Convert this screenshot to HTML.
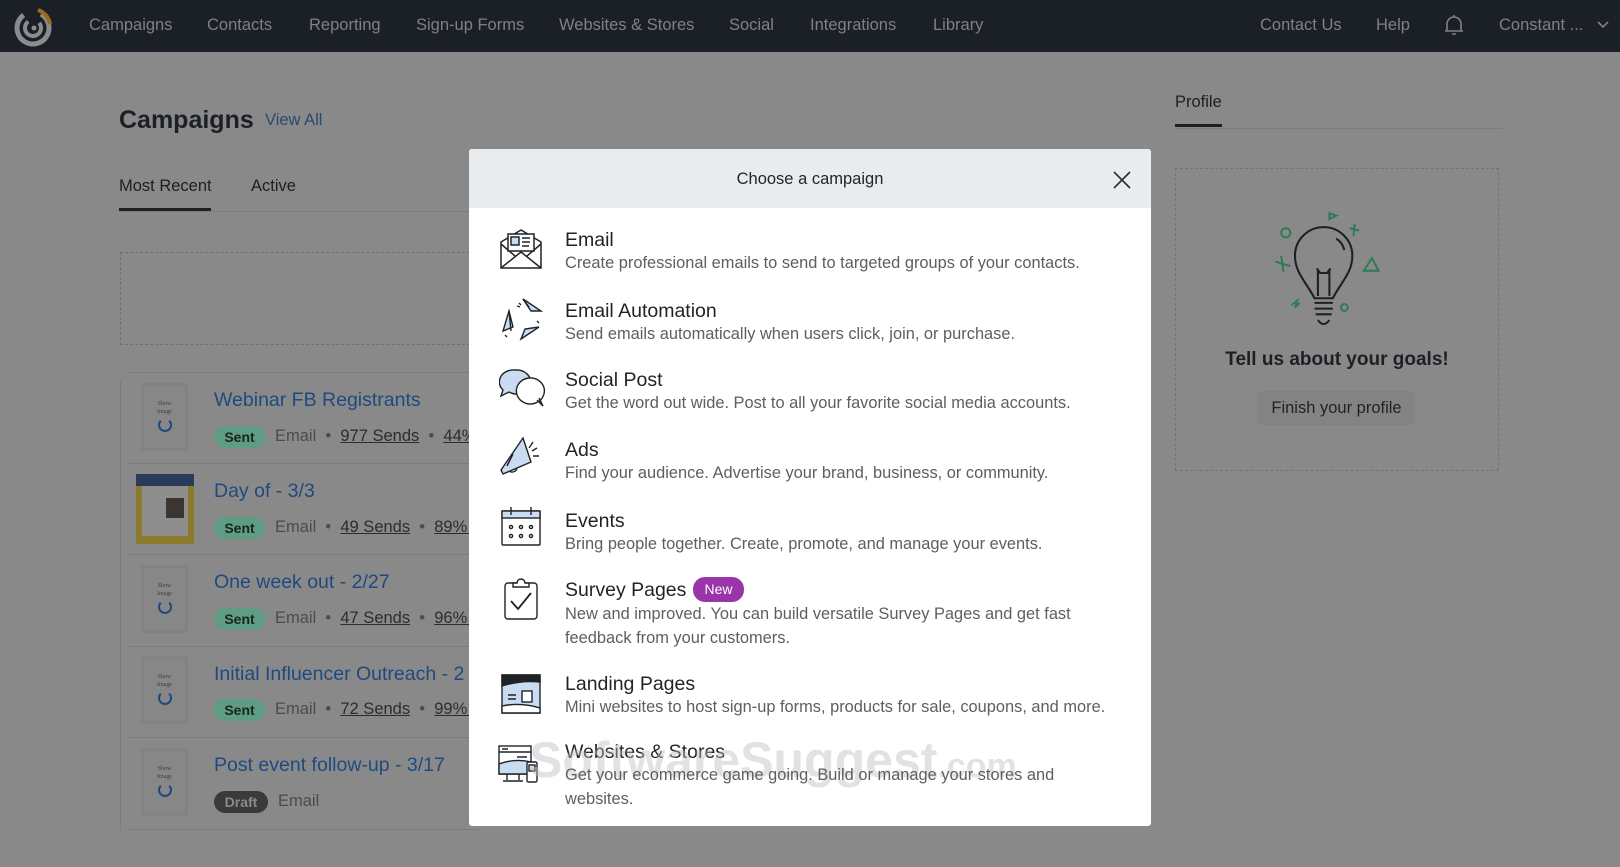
<!DOCTYPE html>
<html><head><meta charset="utf-8"><style>
*{margin:0;padding:0;box-sizing:border-box}
body{width:1620px;height:867px;overflow:hidden;background:#898989;font-family:"Liberation Sans",Arial,sans-serif;position:relative}
.a{position:absolute;white-space:nowrap}
.nav{position:absolute;left:0;top:0;width:1620px;height:52px;background:#1b2027}
.nv{position:absolute;top:16px;font-size:16.5px;color:#7e8186}
.sep{position:absolute;height:1px;background:#7b7b7b}
.th{position:absolute;left:141px;width:47px;height:68px;border:3px solid #838383;background:#878787}
.th span{position:absolute;left:0;right:0;text-align:center;font-family:"Liberation Serif",serif;font-size:6px;color:#3a3f47;top:14px;line-height:8px}
.th b{position:absolute;left:14px;top:32px;width:14px;height:14px;border:2px solid #1f4a7f;border-radius:50%;border-top-color:transparent}
.tt{position:absolute;left:214px;font-size:19.5px;color:#1f4a7f}
.pill{position:absolute;left:214px;width:51px;height:22px;border-radius:11px;background:#5f9c84;color:#1a2520;font-size:14px;font-weight:bold;text-align:center;line-height:22px}
.meta{position:absolute;left:275px;font-size:16.5px;color:#4a4c4f}
.meta u{color:#2a2c2f}
.modal{position:absolute;left:469px;top:149px;width:682px;height:677px;background:#fff;border-radius:3px;overflow:hidden}
.mh{height:59px;background:#e9ecef;text-align:center;line-height:61px;font-size:16.5px;color:#22262a}
.it{position:absolute;left:96px;font-size:19.5px;color:#1f2326}
.ds{position:absolute;left:96px;font-size:16.4px;color:#5b5f63;line-height:23.5px}
.ic{position:absolute;left:30px}
</style></head><body>
<div class="nav">
<svg class="a" style="left:13px;top:6px" width="42" height="42" viewBox="0 0 42 42"><circle cx="20" cy="22" r="16" fill="none" stroke="#8a8d90" stroke-width="5" stroke-dasharray="82 20" transform="rotate(-60 20 22)"/><circle cx="20" cy="22" r="8" fill="none" stroke="#8a8d90" stroke-width="4" stroke-dasharray="38 12" transform="rotate(-40 20 22)"/><path d="M25 4 A18 18 0 0 1 37 18" fill="none" stroke="#9a6b1f" stroke-width="4"/><circle cx="21" cy="22" r="2.5" fill="#8a8d90"/></svg>
<div class="nv" style="left:89px">Campaigns</div>
<div class="nv" style="left:207px">Contacts</div>
<div class="nv" style="left:309px">Reporting</div>
<div class="nv" style="left:416px">Sign-up Forms</div>
<div class="nv" style="left:559px">Websites &amp; Stores</div>
<div class="nv" style="left:729px">Social</div>
<div class="nv" style="left:810px">Integrations</div>
<div class="nv" style="left:933px">Library</div>
<div class="nv" style="left:1260px">Contact Us</div>
<div class="nv" style="left:1376px">Help</div>
<svg class="a" style="left:1444px;top:14px" width="20" height="22" viewBox="0 0 20 22"><path d="M3 17 V10 A7 7 0 0 1 17 10 V17 Z M1 17 H19 M8 20 H12 M10 1 V3" fill="none" stroke="#7e8186" stroke-width="1.6"/></svg>
<div class="nv" style="left:1499px">Constant ...</div>
<svg class="a" style="left:1596px;top:20px" width="14" height="10" viewBox="0 0 14 10"><path d="M2 2 L7 7 L12 2" fill="none" stroke="#7e8186" stroke-width="1.6"/></svg>
</div>

<div class="a" style="left:119px;top:106px;font-size:25px;font-weight:bold;color:#1c2025">Campaigns</div>
<div class="a" style="left:265px;top:111px;font-size:16.5px;color:#2a4a6f">View All</div>
<div class="a" style="left:119px;top:177px;font-size:16.5px;color:#1c2025">Most Recent</div>
<div class="a" style="left:251px;top:177px;font-size:16.5px;color:#1c2025">Active</div>
<div class="sep" style="left:119px;top:211px;width:360px"></div>
<div class="a" style="left:119px;top:208px;width:92px;height:3px;background:#1c2025"></div>
<div class="a" style="left:120px;top:252px;width:360px;height:93px;border:1px dashed #707070;border-right:none"></div>

<div class="a" style="left:120px;top:380px;width:1px;height:450px;background:#7d7d7d"></div>
<div class="sep" style="left:128px;top:372px;width:350px"></div>
<div class="sep" style="left:128px;top:463px;width:350px"></div>
<div class="sep" style="left:128px;top:554px;width:350px"></div>
<div class="sep" style="left:128px;top:646px;width:350px"></div>
<div class="sep" style="left:128px;top:737px;width:350px"></div>
<div class="sep" style="left:128px;top:829px;width:350px"></div>

<div class="th" style="top:383px"><span>Show<br>Image</span><b></b></div>
<div class="tt" style="top:389px">Webinar FB Registrants</div>
<div class="pill" style="top:426px">Sent</div>
<div class="meta" style="top:427px">Email&nbsp; • &nbsp;<u>977 Sends</u>&nbsp; • &nbsp;<u>44% O</u></div>

<div class="a" style="left:136px;top:474px;width:58px;height:70px;background:#8a7a2a"><div class="a" style="left:6px;top:12px;width:46px;height:50px;background:#8e8e8e"></div><div class="a" style="left:30px;top:24px;width:18px;height:20px;background:#3a3530"></div><div class="a" style="left:0;top:0;width:58px;height:12px;background:#2c3a5a"></div></div>
<div class="tt" style="top:480px">Day of - 3/3</div>
<div class="pill" style="top:517px">Sent</div>
<div class="meta" style="top:518px">Email&nbsp; • &nbsp;<u>49 Sends</u>&nbsp; • &nbsp;<u>89% O</u></div>

<div class="th" style="top:565px"><span>Show<br>Image</span><b></b></div>
<div class="tt" style="top:571px">One week out - 2/27</div>
<div class="pill" style="top:608px">Sent</div>
<div class="meta" style="top:609px">Email&nbsp; • &nbsp;<u>47 Sends</u>&nbsp; • &nbsp;<u>96% O</u></div>

<div class="th" style="top:656px"><span>Show<br>Image</span><b></b></div>
<div class="tt" style="top:663px">Initial Influencer Outreach - 2</div>
<div class="pill" style="top:699px">Sent</div>
<div class="meta" style="top:700px">Email&nbsp; • &nbsp;<u>72 Sends</u>&nbsp; • &nbsp;<u>99% O</u></div>

<div class="th" style="top:748px"><span>Show<br>Image</span><b></b></div>
<div class="tt" style="top:754px">Post event follow-up - 3/17</div>
<div class="pill" style="top:791px;width:54px;background:#3a3a3a;color:#8a8a8a">Draft</div>
<div class="meta" style="top:792px;left:278px">Email</div>

<div class="a" style="left:1175px;top:93px;font-size:16.5px;color:#1c2025">Profile</div>
<div class="sep" style="left:1175px;top:128px;width:328px"></div>
<div class="a" style="left:1175px;top:124px;width:47px;height:3px;background:#1c2025"></div>
<div class="a" style="left:1175px;top:168px;width:324px;height:303px;border:1.5px dashed #737373"></div>
<svg class="a" style="left:1272px;top:204px" width="132" height="130" viewBox="0 0 115 113"><g fill="none" stroke="#1c2025" stroke-width="1.8"><path d="M37 82 C30 68 20 60 20 45 A25 25 0 0 1 70 45 C70 60 60 68 53 82 Z"/><path d="M37 86 H53 M37 91 H53 M38 96 H52 M40 101 Q45 108 50 101"/><path d="M40 80 V57 M50 80 V57 M39 56 L42 60 H48 L51 56"/><path d="M56 30 A16 16 0 0 1 63 40"/></g><g fill="none" stroke="#2e7a55" stroke-width="1.7"><circle cx="12" cy="25" r="4"/><path d="M3 50 L16 54 M8 45 L10 59"/><path d="M17 88 L22 84 L20 90 L24 86"/><circle cx="63" cy="90" r="3"/><path d="M87 47 L80 58 H93 Z"/><path d="M50 8 L56 10 L50 13 Z"/><path d="M68 21 L76 23 M72 17 L71 28"/></g></svg>
<div class="a" style="left:1175px;top:349px;width:324px;text-align:center;font-size:19px;font-weight:bold;color:#1c2025">Tell us about your goals!</div>
<div class="a" style="left:1258px;top:391px;width:157px;height:34px;background:#838383;border-radius:4px;text-align:center;line-height:34px;font-size:16.5px;color:#1f2326">Finish your profile</div>

<div class="modal">
<div class="mh">Choose a campaign</div>
<svg class="a" style="left:643px;top:21px" width="20" height="20" viewBox="0 0 20 20"><path d="M2 2 L18 18 M18 2 L2 18" stroke="#2a2e32" stroke-width="1.6"/></svg>

<svg class="ic" style="top:77px" width="44" height="44" viewBox="0 0 44 44"><g fill="none" stroke="#1f2326" stroke-width="1.5"><path d="M2 16 L22 4 L42 16 V42 H2 Z"/><path d="M2 42 L22 26 L42 42 M2 18 L16 30 M42 18 L28 30"/><rect x="9" y="8" width="26" height="17" fill="#fff"/><rect x="12" y="11" width="8" height="8" fill="#c9dcf2"/><path d="M23 12 H31 M23 16 H31 M23 20 H30"/></g></svg>
<div class="it" style="top:80px">Email</div>
<div class="ds" style="top:103px">Create professional emails to send to targeted groups of your contacts.</div>

<svg class="ic" style="top:148px" width="46" height="44" viewBox="0 0 46 44"><g fill="none" stroke="#1f2326" stroke-width="1.4"><path d="M24 2 L32 14 L42 14 Z" fill="#c9dcf2"/><path d="M24 2 L30 10"/><path d="M10 14 L4 34 L14 30 Z" fill="#c9dcf2"/><path d="M10 14 L12 34"/><path d="M40 30 L22 42 L26 32 Z" fill="#c9dcf2"/><path d="M20 6 L22 8 M18 9 L21 10 M6 38 L8 40 M38 24 L40 26"/></g></svg>
<div class="it" style="top:151px">Email Automation</div>
<div class="ds" style="top:174px">Send emails automatically when users click, join, or purchase.</div>

<svg class="ic" style="top:217px" width="48" height="44" viewBox="0 0 48 44"><g fill="none" stroke="#1f2326" stroke-width="1.4"><path d="M16 4 A14 12 0 0 0 4 24 L2 30 L10 26 A14 12 0 1 0 16 4 Z" fill="#c9dcf2"/><path d="M30 12 A14 13 0 1 1 24 36 A14 13 0 0 1 30 12 Z" fill="#fff"/><path d="M38 34 L44 40 L40 32"/></g></svg>
<div class="it" style="top:220px">Social Post</div>
<div class="ds" style="top:243px">Get the word out wide. Post to all your favorite social media accounts.</div>

<svg class="ic" style="top:285px" width="48" height="44" viewBox="0 0 48 44"><g fill="none" stroke="#1f2326" stroke-width="1.4"><path d="M24 4 L32 28 L4 40 L2 36 Z" fill="#c9dcf2"/><path d="M10 37 A5 5 0 0 0 18 34 M14 20 L8 32"/><path d="M34 8 L30 14 M38 14 L33 17 M40 22 L34 22"/></g></svg>
<div class="it" style="top:290px">Ads</div>
<div class="ds" style="top:313px">Find your audience. Advertise your brand, business, or community.</div>

<svg class="ic" style="top:356px" width="44" height="44" viewBox="0 0 44 44"><g fill="none" stroke="#1f2326" stroke-width="1.4"><rect x="3" y="6" width="38" height="34" rx="1"/><rect x="3" y="6" width="38" height="7" fill="#c9dcf2"/><path d="M12 2 V10 M32 2 V10"/><circle cx="12" cy="22" r="1.6"/><circle cx="22" cy="22" r="1.6"/><circle cx="32" cy="22" r="1.6"/><circle cx="12" cy="31" r="1.6"/><circle cx="22" cy="31" r="1.6"/><circle cx="32" cy="31" r="1.6"/></g></svg>
<div class="it" style="top:361px">Events</div>
<div class="ds" style="top:384px">Bring people together. Create, promote, and manage your events.</div>

<svg class="ic" style="top:426px" width="44" height="48" viewBox="0 0 44 48"><g fill="none" stroke="#1f2326" stroke-width="1.4"><rect x="6" y="8" width="32" height="36" rx="3"/><path d="M14 8 V12 H30 V8 H26 A4 4 0 0 0 18 8 Z" fill="#fff"/><path d="M12 26 L19 34 L32 18" stroke-width="1.8"/></g></svg>
<div class="it" style="top:430px">Survey Pages</div>
<div class="a" style="left:224px;top:428px;width:51px;height:25px;border-radius:12px;background:#9b34a8;color:#fff;font-size:14px;text-align:center;line-height:25px">New</div>
<div class="ds" style="top:454px">New and improved. You can build versatile Survey Pages and get fast<br>feedback from your customers.</div>

<svg class="ic" style="top:523px" width="44" height="44" viewBox="0 0 44 44"><g fill="none" stroke="#1f2326" stroke-width="1.4"><rect x="3" y="3" width="38" height="38" fill="#c9dcf2"/><path d="M3 3 H41 V10 Q22 8 3 14 Z" fill="#1f2326"/><path d="M3 34 Q22 30 41 36 V41 H3 Z" fill="#fff"/><path d="M9 23 H17 M9 27 H17"/><rect x="23" y="19" width="10" height="11" fill="#fff"/></g></svg>
<div class="it" style="top:524px">Landing Pages</div>
<div class="ds" style="top:547px">Mini websites to host sign-up forms, products for sale, coupons, and more.</div>

<svg class="ic" style="top:593px;left:28px" width="48" height="44" viewBox="0 0 48 44"><g fill="none" stroke="#1f2326" stroke-width="1.4"><rect x="2" y="4" width="32" height="28" fill="#fff"/><path d="M2 10 H34"/><path d="M2 22 Q18 16 34 20 V32 H2 Z" fill="#c9dcf2"/><path d="M10 32 V38 M22 32 V38 M6 39 H26 M5 7 H11 M20 15 H30"/><rect x="30" y="20" width="10" height="20" rx="1.5" fill="#fff"/><rect x="32" y="23" width="6" height="6" fill="#c9dcf2"/></g></svg>
<div class="it" style="top:592px">Websites &amp; Stores</div>
<div class="a" style="left:60px;top:582px;font-size:50px;font-weight:bold;color:rgba(190,190,190,0.45)">SoftwareSuggest<span style="font-size:34px">.com</span></div>
<div class="ds" style="top:615px">Get your ecommerce game going. Build or manage your stores and<br>websites.</div>
</div>
</body></html>
